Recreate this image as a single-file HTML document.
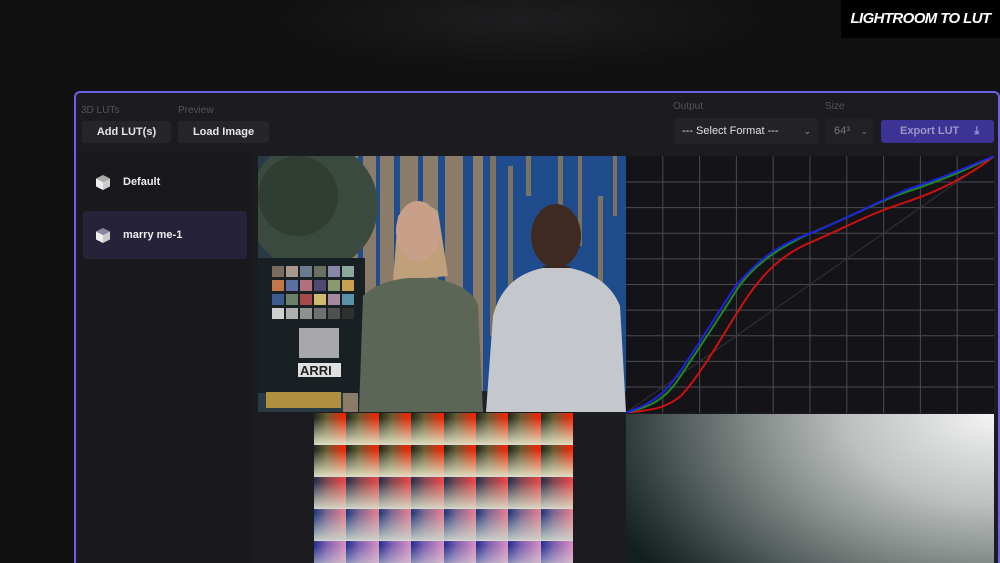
<!DOCTYPE html>
<html style="width:1000px;height:563px;overflow:hidden"><head><meta charset="utf-8"><style>
*{margin:0;padding:0;box-sizing:border-box}
body{width:1000px;height:563px;overflow:hidden;background:#111112;font-family:"Liberation Sans",sans-serif;position:relative}
.top{position:absolute;left:0;top:0;width:1000px;height:92px;background:radial-gradient(ellipse 300px 60px at 520px 20px,#1e1e20,#111112 80%)}
.logo{position:absolute;left:841px;top:0;width:159px;height:38px;background:#000;color:#fff;font-weight:bold;font-style:italic;font-size:15px;line-height:38px;text-align:center;letter-spacing:-.6px}
.panel{position:absolute;left:74px;top:91px;width:926px;height:472px;border:2px solid #6f60e8;border-bottom:none;border-radius:6px 6px 0 0;background:#1c1b1f;overflow:hidden}
.lbl{position:absolute;font-size:10px;color:#55545a}
.btn{position:absolute;background:#26252a;border-radius:3px;color:#e6e6e8;font-weight:bold;font-size:11px;text-align:center;line-height:22px}
.side{position:absolute;left:2px;top:58px;width:174px;height:440px;background:#19181c}
.item{position:absolute;left:5px;width:164px;height:48px;border-radius:3px;color:#eee;font-weight:bold;font-size:11px;line-height:48px;padding-left:40px}
.cube{position:absolute;left:12px;top:16px}
.row{position:absolute;left:238px;width:259px;height:32.3px;display:flex;border-bottom:1px solid #d8d8d0}
.row div{flex:1}
.r1 div{background:linear-gradient(to bottom,rgba(0,0,0,0) 15%,rgba(225,225,195,.95)),linear-gradient(to right,#1a2a20,#6a5a30 40%,#ff2000)}
.r3 div{background:linear-gradient(to bottom,rgba(0,0,0,0) 15%,rgba(215,220,200,.92)),linear-gradient(to right,#203050,#804850 40%,#f04848)}
.r4 div{background:linear-gradient(to bottom,rgba(0,0,0,0) 15%,rgba(205,215,205,.9)),linear-gradient(to right,#1a3a80,#806890 40%,#e88090)}
.r5 div{background:linear-gradient(to bottom,rgba(0,0,0,0) 15%,rgba(215,215,215,.85)),linear-gradient(to right,#203090,#8060b0 40%,#d890c0)}
</style></head><body>
<div class="top"></div>
<div class="logo">LIGHTROOM TO LUT</div>
<div class="panel">
 <div class="lbl" style="left:5px;top:12px">3D LUTs</div>
 <div class="lbl" style="left:102px;top:12px">Preview</div>
 <div class="btn" style="left:6px;top:28px;width:89px">Add LUT(s)</div>
 <div class="btn" style="left:102px;top:28px;width:91px">Load Image</div>
 <div class="lbl" style="left:597px;top:8px">Output</div>
 <div class="lbl" style="left:749px;top:8px">Size</div>
 <div style="position:absolute;left:598px;top:25px;width:145px;height:26px;background:#232226;border-radius:3px;color:#e0e0e2;font-size:11px;line-height:26px;padding-left:8px">--- Select Format ---<span style="position:absolute;right:8px;font-size:9px;color:#999">⌄</span></div>
 <div style="position:absolute;left:750px;top:25px;width:48px;height:26px;background:#212024;border-radius:3px;color:#77767c;font-size:11px;line-height:26px;padding-left:8px">64³<span style="position:absolute;right:6px;font-size:9px">⌄</span></div>
 <div style="position:absolute;left:805px;top:27px;width:113px;height:23px;background:#3d3394;border-radius:3px;color:#9a96c6;font-weight:bold;font-size:11px;line-height:23px;padding-left:19px">Export LUT <span style="margin-left:12px">⤓</span></div>
 <div class="side">
  <div class="item" style="top:7px"><svg class="cube" width="16" height="17" viewBox="0 0 16 17"><path d="M8 1 L15 4.5 L8 8 L1 4.5Z" fill="#aaa"/><path d="M1 4.5 L8 8 L8 16 L1 12.5Z" fill="#eee"/><path d="M15 4.5 L8 8 L8 16 L15 12.5Z" fill="#ccc"/></svg>Default</div>
  <div class="item" style="top:60px;background:#25223a"><svg class="cube" width="16" height="17" viewBox="0 0 16 17"><path d="M8 1 L15 4.5 L8 8 L1 4.5Z" fill="#8a88a0"/><path d="M1 4.5 L8 8 L8 16 L1 12.5Z" fill="#eee"/><path d="M15 4.5 L8 8 L8 16 L15 12.5Z" fill="#ccc"/></svg>marry me-1</div>
 </div>
 <svg style="position:absolute;left:182px;top:63px" width="368" height="256" viewBox="0 0 368 256">
  <rect width="368" height="256" fill="#2a3a44"/>
  <rect x="85" y="0" width="283" height="256" fill="#8a7c68"/>
  <g fill="#1f4c8c">
   <rect x="100" y="0" width="5" height="120"/><rect x="118" y="0" width="4" height="150"/><rect x="136" y="0" width="6" height="140"/><rect x="160" y="0" width="5" height="100"/><rect x="180" y="0" width="7" height="160"/><rect x="205" y="0" width="10" height="200"/><rect x="225" y="0" width="143" height="256"/>
  </g>
  <g fill="#7c7260"><rect x="232" y="0" width="6" height="180"/><rect x="250" y="10" width="5" height="150"/><rect x="268" y="0" width="5" height="40"/><rect x="300" y="0" width="5" height="120"/><rect x="320" y="0" width="4" height="90"/><rect x="340" y="40" width="5" height="200"/><rect x="355" y="0" width="4" height="60"/></g>
  <ellipse cx="55" cy="50" rx="65" ry="65" fill="#3b4a3e"/>
  <ellipse cx="40" cy="40" rx="40" ry="40" fill="#2f3d33"/>
  <rect x="0" y="102" width="107" height="135" fill="#182024"/>
  <g>
   <rect x="14" y="110" width="12" height="11" fill="#7a6a60"/><rect x="28" y="110" width="12" height="11" fill="#a89890"/><rect x="42" y="110" width="12" height="11" fill="#6a7a90"/><rect x="56" y="110" width="12" height="11" fill="#6a7060"/><rect x="70" y="110" width="12" height="11" fill="#8a88a8"/><rect x="84" y="110" width="12" height="11" fill="#8aa8a0"/>
   <rect x="14" y="124" width="12" height="11" fill="#c07848"/><rect x="28" y="124" width="12" height="11" fill="#5a70a0"/><rect x="42" y="124" width="12" height="11" fill="#b07080"/><rect x="56" y="124" width="12" height="11" fill="#504870"/><rect x="70" y="124" width="12" height="11" fill="#8a9a70"/><rect x="84" y="124" width="12" height="11" fill="#c8a050"/>
   <rect x="14" y="138" width="12" height="11" fill="#3a5a90"/><rect x="28" y="138" width="12" height="11" fill="#6a8068"/><rect x="42" y="138" width="12" height="11" fill="#a84848"/><rect x="56" y="138" width="12" height="11" fill="#d0b870"/><rect x="70" y="138" width="12" height="11" fill="#a888a0"/><rect x="84" y="138" width="12" height="11" fill="#5a90a8"/>
   <rect x="14" y="152" width="12" height="11" fill="#d0d0d0"/><rect x="28" y="152" width="12" height="11" fill="#b0b0b0"/><rect x="42" y="152" width="12" height="11" fill="#909090"/><rect x="56" y="152" width="12" height="11" fill="#707070"/><rect x="70" y="152" width="12" height="11" fill="#505050"/><rect x="84" y="152" width="12" height="11" fill="#303030"/>
  </g>
  <rect x="41" y="172" width="40" height="30" fill="#a8a8aa"/>
  <rect x="40" y="207" width="43" height="14" fill="#e0e0e0"/>
  <text x="42" y="219" font-family="Liberation Sans" font-weight="bold" font-size="13" fill="#222">ARRI</text>
  <rect x="8" y="236" width="75" height="16" fill="#b09040"/>
  <rect x="100" y="235" width="268" height="21" fill="#1e2228"/>
  <path d="M140 60 Q160 40 180 55 L190 120 L135 125Z" fill="#c0a07a"/>
  <ellipse cx="160" cy="75" rx="22" ry="30" fill="#c8a08a"/>
  <path d="M101 256 L105 140 Q120 125 150 122 L175 122 Q215 130 220 150 L225 256Z" fill="#5c6656"/>
  <ellipse cx="298" cy="80" rx="25" ry="32" fill="#3e2a22"/>
  <path d="M285 110 L312 110 L315 125 L282 125Z" fill="#3a2820"/>
  <path d="M228 256 L235 160 Q245 120 285 112 L312 112 Q350 120 362 150 L368 256Z" fill="#c4c8cc"/>
 </svg>
 <svg style="position:absolute;left:550px;top:63px" width="368" height="257" viewBox="0 0 366 255">
  <rect width="366" height="255" fill="#141418"/>
  <g stroke="#4a4a50" stroke-width="1">
   <path d="M36.6 0V255M73.2 0V255M109.8 0V255M146.4 0V255M183 0V255M219.6 0V255M256.2 0V255M292.8 0V255M329.4 0V255"/>
   <path d="M0 25.5H366M0 51H366M0 76.5H366M0 102H366M0 127.5H366M0 153H366M0 178.5H366M0 204H366M0 229.5H366"/>
  </g>
  <path d="M0 255 L366 0" stroke="#333338"/>
  <path d="M0 255 C30 252 40 250 55 238 C80 210 100 170 122 138 C140 112 160 95 185 85 C220 70 240 58 280 45 C310 35 340 20 366 0" stroke="#cc1010" stroke-width="2" fill="none"/>
  <path d="M0 255 C20 250 35 245 50 225 C70 195 90 165 112 130 C130 105 155 90 180 78 C220 62 250 45 280 35 C320 22 345 10 366 0" stroke="#1f8a1f" stroke-width="2" fill="none"/>
  <path d="M0 255 C20 248 35 240 48 222 C70 192 88 160 110 128 C130 105 150 88 185 76 C220 62 250 45 280 33 C320 20 345 8 366 0" stroke="#2020e0" stroke-width="2" fill="none"/>
 </svg>
 <div class="row r1" style="top:320px"><div></div><div></div><div></div><div></div><div></div><div></div><div></div><div></div></div>
 <div class="row r1" style="top:352px"><div></div><div></div><div></div><div></div><div></div><div></div><div></div><div></div></div>
 <div class="row r3" style="top:384px"><div></div><div></div><div></div><div></div><div></div><div></div><div></div><div></div></div>
 <div class="row r4" style="top:416px"><div></div><div></div><div></div><div></div><div></div><div></div><div></div><div></div></div>
 <div class="row r5" style="top:448px"><div></div><div></div><div></div><div></div><div></div><div></div><div></div><div></div></div>
 <div style="position:absolute;left:550px;top:321px;width:368px;height:170px;background:radial-gradient(ellipse 420px 260px at 100% 0%,#f4f4f4 0%,#bcc0bf 35%,#7c8482 60%,#2a3634 90%,#142020 100%)"></div>
</div>
</body></html>
